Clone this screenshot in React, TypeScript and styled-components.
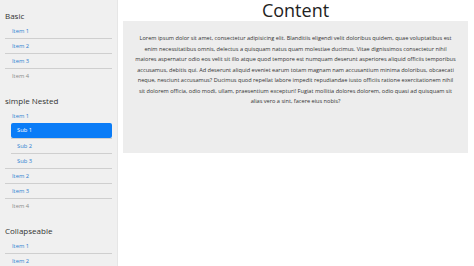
import React from 'react';
import styled, { createGlobalStyle } from 'styled-components';

type Item = { label: string; disabled?: boolean; active?: boolean; children?: Item[] };
type Group = { title: string; items: Item[] };

const groups: Group[] = [
  {
    title: 'Basic',
    items: [{ label: 'Item 1' }, { label: 'Item 2' }, { label: 'Item 3' }, { label: 'Item 4', disabled: true }],
  },
  {
    title: 'simple Nested',
    items: [
      {
        label: 'Item 1',
        children: [{ label: 'Sub 1', active: true }, { label: 'Sub 2' }, { label: 'Sub 3' }],
      },
      { label: 'Item 2' },
      { label: 'Item 3' },
      { label: 'Item 4', disabled: true },
    ],
  },
  {
    title: 'Collapseable',
    items: [{ label: 'Item 1' }, { label: 'Item 2' }],
  },
];

const text =
  'Lorem ipsum dolor sit amet, consectetur adipisicing elit. Blanditiis eligendi velit doloribus quidem, quae voluptatibus est enim necessitatibus omnis, delectus a quisquam natus quam molestiae ducimus. Vitae dignissimos consectetur nihil maiores aspernatur odio eos velit sit illo atque quod tempore est numquam deserunt asperiores aliquid officiis temporibus accusamus, debitis qui. Ad deserunt aliquid eveniet earum totam magnam nam accusantium minima doloribus, obcaecati neque, nesciunt accusamus? Ducimus quod repellat labore impedit repudiandae iusto officiis ratione exercitationem nihil sit dolorem officia, odio modi, ullam, praesentium excepturi! Fugiat mollitia dolores dolorem, odio quasi ad quisquam sit alias vero a sint, facere eius nobis?';

const renderItems = (items: Item[], nested = false) => (
  <List $nested={nested}>
    {items.map((item, i) => (
      <Row key={i}>
        <Link $disabled={item.disabled} $active={item.active} $nested={nested}>
          {item.label}
        </Link>
        {item.children && renderItems(item.children, true)}
      </Row>
    ))}
  </List>
);

export default function App() {
  return (
    <>
      <GlobalStyle />
      <Page>
        <Sidebar>
          {groups.map((g) => (
            <Section key={g.title}>
              <Heading>{g.title}</Heading>
              {renderItems(g.items)}
            </Section>
          ))}
        </Sidebar>
        <Main>
          <Title>Content</Title>
          <Panel>{text}</Panel>
        </Main>
      </Page>
    </>
  );
}

const GlobalStyle = createGlobalStyle`
  body {
    margin: 0;
    background: #fff;
    font-family: "Open Sans", "Noto Sans", sans-serif;
  }
`;

const Page = styled.div`
  display: flex;
  height: 266px;
  overflow: hidden;
`;

const Sidebar = styled.nav`
  width: 118px;
  flex-shrink: 0;
  background: #f0f0f0;
  border-right: 1px solid #e6e6e6;
  padding-top: 10px;
  box-sizing: border-box;
`;

const Section = styled.div`
  margin-bottom: 12px;
`;

const Heading = styled.div`
  font-size: 8px;
  line-height: 12px;
  height: 12px;
  color: #333;
  padding-left: 5px;
  margin-bottom: 2px;
`;

const List = styled.ul<{ $nested: boolean }>`
  list-style: none;
  margin: 0 ${(p) => (p.$nested ? '0 0 6px' : '5px')};
  padding: 0;
`;

const Row = styled.li`
  border-bottom: 1px solid #cfcfcf;

  &:last-child {
    border-bottom: none;
  }
`;

const Link = styled.a<{ $disabled?: boolean; $active?: boolean; $nested: boolean }>`
  display: block;
  height: 14px;
  line-height: 14px;
  font-size: 5.8px;
  padding-left: ${(p) => (p.$nested ? '6px' : '7px')};
  border-radius: 2px;
  color: ${(p) => (p.$active ? '#fff' : p.$disabled ? '#8a8a8a' : '#2c7fd0')};
  background: ${(p) => (p.$active ? '#0a7cf7' : 'transparent')};
  ${(p) => (p.$active ? 'height: 15px; line-height: 15px;' : '')}
`;

const Main = styled.main`
  flex: 1;
  padding: 0 6px 0 5px;
`;

const Title = styled.h1`
  margin: 0;
  height: 21px;
  line-height: 21px;
  font-size: 18px;
  font-weight: 400;
  text-align: center;
  color: #222;
`;

const Panel = styled.div`
  background: #ededed;
  height: 132px;
  box-sizing: border-box;
  padding: 12px 12px;
  text-align: center;
  font-size: 5.6px;
  line-height: 10.5px;
  color: #333;
`;
